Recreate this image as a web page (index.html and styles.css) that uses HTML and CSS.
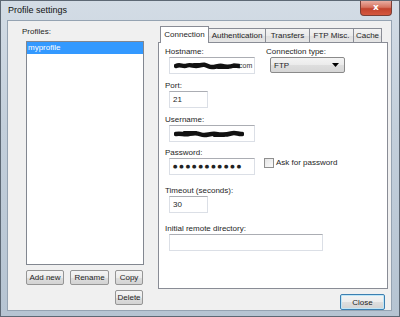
FILE: index.html
```html
<!DOCTYPE html>
<html>
<head>
<meta charset="utf-8">
<link rel="stylesheet" href="styles.css">
</head>
<body>
<div class="window">
  <div class="titlebar">
    <span class="title">Profile settings</span>
    <div class="winclose">x</div>
  </div>
  <div class="client">
    <div class="left">
      <div class="lbl profiles-lbl">Profiles:</div>
      <div class="listbox">
        <div class="item sel">myprofile</div>
      </div>
      <div class="btnrow">
        <button class="btn b-add">Add new</button>
        <button class="btn b-ren">Rename</button>
        <button class="btn b-copy">Copy</button>
      </div>
      <div class="btnrow end">
        <button class="btn b-copy">Delete</button>
      </div>
    </div>
    <div class="right">
      <div class="tabs">
        <div class="tab active t1">Connection</div>
        <div class="tab t2">Authentication</div>
        <div class="tab t3">Transfers</div>
        <div class="tab t4">FTP Misc.</div>
        <div class="tab t5">Cache</div>
      </div>
      <div class="panel">
        <div class="row">
          <div class="field">
            <div class="lbl">Hostname:</div>
            <div class="input w86 host">
              <svg class="scribble" width="66" height="10" viewBox="0 0 66 10"><path d="M2 5 C6 3 9 6 13 4.5 S20 6 25 4.5 S31 3.5 35 5.5 S44 4 48 5 S56 6 60 4.5 L65 5" fill="none" stroke="#111" stroke-width="4.5" stroke-linecap="round"/><path d="M20 3 L30 3 M44 7 L54 7" stroke="#111" stroke-width="2" stroke-linecap="round"/></svg>
              <span class="com">com</span>
            </div>
          </div>
          <div class="field ctype">
            <div class="lbl">Connection type:</div>
            <div class="combo"><span>FTP</span><svg class="arrow" width="7" height="4" viewBox="0 0 7 4"><path d="M0 0 H7 L3.5 4 Z" fill="#000"/></svg></div>
          </div>
        </div>
        <div class="field port">
          <div class="lbl">Port:</div>
          <div class="input w39">21</div>
        </div>
        <div class="field user">
          <div class="lbl">Username:</div>
          <div class="input w86">
            <svg class="scribble" width="70" height="10" viewBox="0 0 70 10"><path d="M2 5 C7 4 10 6 15 5 S22 3.5 27 5.5 S36 4 42 5 S52 6 57 4.5 S64 5.5 68 5" fill="none" stroke="#111" stroke-width="4.5" stroke-linecap="round"/><path d="M10 3 L22 3 M40 7 L50 7" stroke="#111" stroke-width="2" stroke-linecap="round"/></svg>
          </div>
        </div>
        <div class="row pass">
          <div class="field">
            <div class="lbl">Password:</div>
            <div class="input w86 dots">●●●●●●●●●●●</div>
          </div>
          <div class="check">
            <span class="box"></span>
            <span class="lbl">Ask for password</span>
          </div>
        </div>
        <div class="field timeout">
          <div class="lbl">Timeout (seconds):</div>
          <div class="input w39">30</div>
        </div>
        <div class="field initdir">
          <div class="lbl">Initial remote directory:</div>
          <div class="input w154"></div>
        </div>
      </div>
      <div class="footer">
        <button class="btn default b-close">Close</button>
      </div>
    </div>
  </div>
</div>
</body>
</html>
```

FILE: styles.css
```css
html, body {
  margin: 0;
  padding: 0;
}
body {
  width: 400px;
  height: 317px;
  overflow: hidden;
  font-family: "Liberation Sans", Arial, sans-serif;
  font-size: 8px;
  color: #1e1e1e;
}
.window {
  width: 400px;
  height: 317px;
  box-sizing: border-box;
  border: 1px solid #5d6874;
  background: linear-gradient(180deg, #d3dce5 0%, #c3cfdb 40%, #b6c4d2 100%);
  padding: 0 7px 5px 6px;
  display: flex;
  flex-direction: column;
}
.titlebar {
  height: 19px;
  display: flex;
  justify-content: space-between;
  align-items: flex-start;
  flex: none;
}
.title {
  font-size: 9px;
  line-height: 19px;
  padding-left: 1px;
  color: #111;
}
.winclose {
  width: 32px;
  height: 15px;
  box-sizing: border-box;
  border: 1px solid #7a3f36;
  border-top: none;
  border-radius: 0 0 4px 4px;
  background: linear-gradient(180deg, #e9ada1 0%, #d6735f 45%, #c2442e 55%, #d5583f 100%);
  color: #fff;
  font-family: "DejaVu Sans", sans-serif;
  font-weight: bold;
  font-size: 9px;
  line-height: 13px;
  text-align: center;
}
.client {
  flex: 1;
  border: 1px solid #95a3b2;
  background: #f0f0f0;
  display: flex;
  padding: 5px 0 0 18px;
  box-sizing: border-box;
}
.lbl {
  line-height: 10px;
  height: 10px;
  white-space: nowrap;
}
.left {
  width: 118px;
  display: flex;
  flex-direction: column;
}
.profiles-lbl {
  margin-top: 1px;
  margin-left: -4px;
}
.listbox {
  margin-top: 4px;
  height: 224px;
  box-sizing: border-box;
  border: 1px solid #828790;
  background: #fff;
}
.item {
  height: 12px;
  line-height: 12px;
  padding-left: 1px;
}
.item.sel {
  background: #3399ff;
  color: #fff;
}
.btnrow {
  display: flex;
  gap: 6px;
  margin-top: 5px;
}
.btnrow.end {
  justify-content: flex-end;
  padding-right: 1px;
}
.btn {
  font-family: "Liberation Sans", Arial, sans-serif;
  font-size: 8px;
  color: #1e1e1e;
  height: 15px;
  padding: 0;
  box-sizing: border-box;
  border: 1px solid #959595;
  border-radius: 2px;
  background: linear-gradient(180deg, #f4f4f4 0%, #ececec 50%, #dedede 51%, #d3d3d3 100%);
  line-height: 13px;
  text-align: center;
}
.b-add { width: 38px; }
.b-ren { width: 39px; }
.b-copy { width: 28px; }
.right {
  width: 230px;
  margin-left: 14px;
  display: flex;
  flex-direction: column;
}
.tabs {
  height: 16px;
  display: flex;
  align-items: flex-end;
  padding-left: 2px;
}
.tab {
  height: 14px;
  box-sizing: border-box;
  border: 1px solid #898c95;
  border-bottom: none;
  background: linear-gradient(180deg, #f3f3f3 0%, #ebebeb 50%, #dedede 51%, #e6e6e6 100%);
  text-align: center;
  line-height: 13px;
  margin-left: -1px;
  white-space: nowrap;
}
.tab.active {
  height: 17px;
  margin-bottom: -1px;
  background: #fff;
  position: relative;
  z-index: 1;
  line-height: 15px;
  margin-left: 0;
}
.t1 { width: 49px; }
.t2 { width: 58px; }
.t3 { width: 45px; }
.t4 { width: 45px; }
.t5 { width: 29px; }
.panel {
  height: 247px;
  box-sizing: border-box;
  border: 1px solid #898c95;
  background: #fff;
  padding: 4px 0 0 6px;
}
.row {
  display: flex;
}
.field .input {
  margin-left: 4px;
}
.input {
  height: 17px;
  box-sizing: border-box;
  border: 1px solid #dbdfe6;
  border-top-color: #abadb3;
  background: #fff;
  padding-left: 3px;
  line-height: 15px;
  display: flex;
  align-items: center;
  white-space: nowrap;
}
.w86 { width: 86px; }
.w39 { width: 39px; }
.w154 { width: 154px; }
.host .com {
  margin-left: -1px;
  font-size: 7px;
  color: #333;
}
.scribble {
  flex: none;
  margin-left: 1px;
}
.ctype {
  margin-left: 11px;
}
.combo {
  margin-left: 4px;
  width: 75px;
  height: 16px;
  box-sizing: border-box;
  border: 1px solid #8a8a8a;
  border-radius: 2px;
  background: linear-gradient(180deg, #f4f4f4 0%, #ebebeb 50%, #dedede 51%, #d6d6d6 100%);
  display: flex;
  align-items: center;
  justify-content: space-between;
  padding: 0 5px 0 3px;
}
.port { margin-top: 7px; }
.user { margin-top: 7px; }
.pass { margin-top: 6px; }
.dots {
  font-family: "DejaVu Sans", sans-serif;
  font-size: 5px;
  letter-spacing: 2px;
  color: #222;
  padding-left: 3px;
}
.check {
  margin-left: 9px;
  margin-top: 10px;
  display: flex;
  align-items: flex-start;
  gap: 2px;
  height: 10px;
}
.box {
  width: 10px;
  height: 10px;
  box-sizing: border-box;
  border: 1px solid #8f8f8f;
  background: linear-gradient(135deg, #e4e4e4, #fbfbfb);
  flex: none;
}
.check .lbl {
  line-height: 10px;
}
.timeout { margin-top: 11px; }
.initdir { margin-top: 11px; }
.footer {
  display: flex;
  justify-content: flex-end;
  padding-right: 3px;
  margin-top: 5px;
}
.b-close {
  width: 45px;
  height: 16px;
}
.btn.default {
  border-color: #3c7fb1;
  box-shadow: inset 0 0 0 1px #bfe6f7;
}
```
